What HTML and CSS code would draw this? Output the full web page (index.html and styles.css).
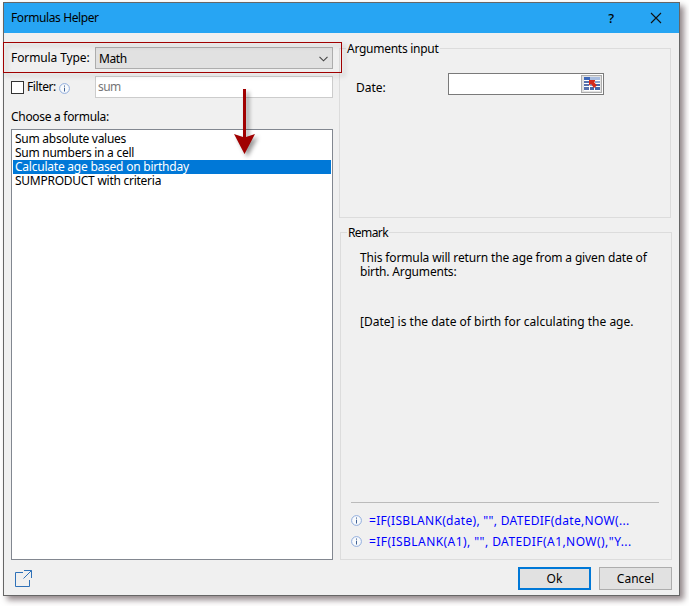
FILE: index.html
```html
<!DOCTYPE html>
<html lang="en">
<head>
<meta charset="utf-8">
<title>Formulas Helper</title>
<link rel="stylesheet" href="styles.css">
</head>
<body>
<div class="window">
  <header class="titlebar">
    <span class="title">Formulas Helper</span>
    <span class="help">?</span>
    <svg class="close" width="12" height="12" viewBox="0 0 12 12"><path d="M1 1L11 11M11 1L1 11" stroke="#111" stroke-width="1.1" fill="none"/></svg>
  </header>
  <main class="content">
    <section class="left">
      <div class="row">
        <span class="label"><span class="t-type">Formula Type:</span></span>
        <div class="combo"><span class="t-math">Math</span>
          <svg width="9" height="6" viewBox="0 0 9 6"><path d="M.5 .8L4.5 4.8L8.5 .8" stroke="#444" stroke-width="1.1" fill="none"/></svg>
        </div>
      </div>
      <div class="row">
        <span class="label"><i class="check"></i><span class="t-filter">Filter:</span>
          <svg class="info" width="11" height="11" viewBox="0 0 11 11"><circle cx="5.5" cy="5.5" r="4.9" fill="#f8fafc" stroke="#8facdc"/><path d="M5.5 2.5v1.2M5.5 4.7v3.8" stroke="#416294"/></svg>
        </span>
        <div class="filter"><span class="t-sum">sum</span></div>
      </div>
      <div class="choose"><span class="t-choose">Choose a formula:</span></div>
      <div class="list">
        <div class="item"><span class="t-item">Sum absolute values</span></div>
        <div class="item"><span class="t-item">Sum numbers in a cell</span></div>
        <div class="item selected"><span class="t-item-long">Calculate age based on birthday</span></div>
        <div class="item"><span class="t-item">SUMPRODUCT with criteria</span></div>
      </div>
    </section>
    <section class="right">
      <div class="group args">
        <div class="legend"><span class="t-args">Arguments input</span></div>
        <div class="field">
          <span class="date-label">Date:</span>
          <div class="date-input"><span class="picker">
            <svg width="16" height="14" viewBox="0 0 16 14"><path fill="#fff" d="M0 0h16v14H0z"/><path fill="#3c67ba" d="M0 0h6v3H0z"/><path fill="#a9bddf" d="M6 0h10v3H6z"/><path fill="#5871ad" d="M0 4h5v2H0zM0 7h5v2H0zM0 10h5v3H0z"/><path fill="#8da5d2" d="M6 4h4v2H6zM11 4h5v2h-5zM6 7h4v2H6z"/><path fill="#4767a9" d="M11 7h5v2h-5zM6 10h4v3H6zM11 10h5v3h-5z"/><path fill="#d52b1d" d="M5 3h6v1.500L10 5l3 3.500L10 11 7 7 5 8.500z"/></svg>
          </span></div>
        </div>
      </div>
      <div class="group remark">
        <div class="legend"><span class="t-remark">Remark</span></div>
        <div class="desc">
          <div><span class="t-d1">This formula will return the age from a given date of</span></div>
          <div><span class="t-d2">birth. Arguments:</span></div>
          <div class="gap">[Date] is the date of birth for calculating the age.</div>
        </div>
        <div class="examples">
          <div class="example">
            <svg width="11" height="11" viewBox="0 0 11 11"><circle cx="5.5" cy="5.5" r="4.9" fill="#f8fafc" stroke="#8facdc"/><path d="M5.5 2.5v1.2M5.5 4.7v3.8" stroke="#416294"/></svg>
            <span class="t-e1">=IF(ISBLANK(date), "", DATEDIF(date,NOW(...</span>
          </div>
          <div class="example">
            <svg width="11" height="11" viewBox="0 0 11 11"><circle cx="5.5" cy="5.5" r="4.9" fill="#f8fafc" stroke="#8facdc"/><path d="M5.5 2.5v1.2M5.5 4.7v3.8" stroke="#416294"/></svg>
            <span class="t-e2">=IF(ISBLANK(A1), "", DATEDIF(A1,NOW(),"Y...</span>
          </div>
        </div>
      </div>
    </section>
  </main>
  <footer class="footer">
    <svg class="export" width="18" height="18" viewBox="0 0 18 18"><path d="M8 2.5H.5V16.500H14.500V10M9 .5H16.500V8M8.500 8.500L16.500 .5" fill="none" stroke="#2f71b8"/></svg>
    <button class="btn ok">Ok</button>
    <button class="btn">Cancel</button>
  </footer>
</div>
<div class="highlight"></div>
<svg class="arrow" width="32" height="76" viewBox="0 0 32 76"><path d="M9 1h3v48l9-3L10.500 66L0 46l9 3z" fill="#a00000"/></svg>
</body>
</html>
```
FILE: styles.css
```css
* { box-sizing: border-box; }
body {
  margin: 0;
  padding: 2px 0 0 3px;
  width: 689px;
  height: 606px;
  overflow: hidden;
  background: #fff;
  color: #000;
  font: 12px/14px "Noto Sans", sans-serif;
  white-space: nowrap;
}
svg { display: block; flex: none; }
.window {
  width: 677px;
  height: 594px;
  border: 1px solid #666;
  background: #f0f0f0;
  box-shadow: 4px 4px 6px rgba(60, 40, 45, .55);
}
.titlebar {
  display: flex;
  align-items: center;
  height: 30px;
  padding: 0 17px 0 7px;
  background: #27a5f3;
}
.title { flex: 1; letter-spacing: -.4px; }
.help { margin-right: 36px; font-size: 13px; font-weight: 500; }
.content {
  display: flex;
  gap: 6px;
  height: 527px;
  padding: 0 7px;
}
.left { width: 322px; padding-top: 14px; }
.row { display: flex; height: 22px; margin-bottom: 7px; }
.label { display: flex; align-items: center; width: 84px; }
.combo {
  display: flex;
  align-items: center;
  justify-content: space-between;
  width: 238px;
  padding: 1px 4px 0 3px;
  border: 1px solid #adadad;
  background: #e1e1e1;
}
.check { width: 13px; height: 13px; margin-right: 3px; border: 1px solid #333; background: #fff; }
.info { margin: 3px 0 0 3px; }
.filter {
  display: flex;
  align-items: center;
  width: 238px;
  padding-left: 2px;
  border: 1px solid #ccc;
  background: #fff;
  color: #767676;
}
.choose { display: flex; align-items: center; height: 24px; padding-bottom: 1px; }
.list { height: 431px; padding: 2px 1px; border: 1px solid #828790; background: #fff; }
.item { height: 14px; padding-left: 2px; }
.selected { background: #0078d7; color: #fff; }
.right { width: 333px; padding-top: 15px; }
.group { width: 332px; border: 1px solid #dcdcdc; }
.args { height: 170px; margin-bottom: 14px; }
.remark { display: flex; flex-direction: column; height: 328px; margin-left: 1px; }
.legend { width: max-content; height: 16px; margin: -8px 0 0 6px; padding: 1px 1px 0; background: #f0f0f0; }
.field { display: flex; align-items: center; margin: 16px 0 0 16px; }
.date-label { width: 92px; padding-top: 7px; }
.date-input {
  display: flex;
  justify-content: flex-end;
  width: 156px;
  height: 22px;
  padding: 1px;
  border: 1px solid #7a7a7a;
  background: #fff;
}
.picker { padding: 1px 2px; width: 21px; height: 18px; border: 1px solid #adadad; background: #e1e1e1; }
.desc { margin: 10px 0 0 19px; }
.gap { margin-top: 36px; }
.examples { margin: auto 12px 7px 10px; padding-top: 7px; border-top: 1px solid #bbb; color: #00f; }
.example { display: flex; align-items: center; gap: 7px; height: 21px; }
.footer { display: flex; align-items: flex-start; height: 35px; padding: 7px 7px 0 11px; }
.export { margin: 3px auto 0 0; }
.btn {
  width: 73px;
  height: 23px;
  margin-left: 8px;
  padding: 0;
  border: 1px solid #adadad;
  background: #e1e1e1;
  color: #000;
  font: inherit;
}
.ok { border: 2px solid #0078d7; }

.t-type { letter-spacing: -.1px; }
.t-math { letter-spacing: -.4px; }
.t-filter { letter-spacing: -.4px; }
.t-sum { letter-spacing: -.6px; }
.t-choose { letter-spacing: -.3px; }
.t-item { letter-spacing: -.26px; }
.t-item-long { letter-spacing: -.23px; }
.t-args { letter-spacing: -.27px; }
.t-remark { letter-spacing: -.6px; }
.t-d1 { letter-spacing: -.14px; }
.t-d2 { letter-spacing: -.18px; }
.t-e1 { letter-spacing: .31px; }
.t-e2 { letter-spacing: .44px; }

.highlight {
  position: absolute;
  left: 3px;
  top: 42px;
  width: 339px;
  height: 31px;
  border: 1px solid #a00000;
  filter: drop-shadow(3px 3px 2px rgba(0, 0, 0, .25));
}
.arrow { position: absolute; left: 234px; top: 88px; filter: drop-shadow(3px 3px 2px rgba(0, 0, 0, .4)); }
```
